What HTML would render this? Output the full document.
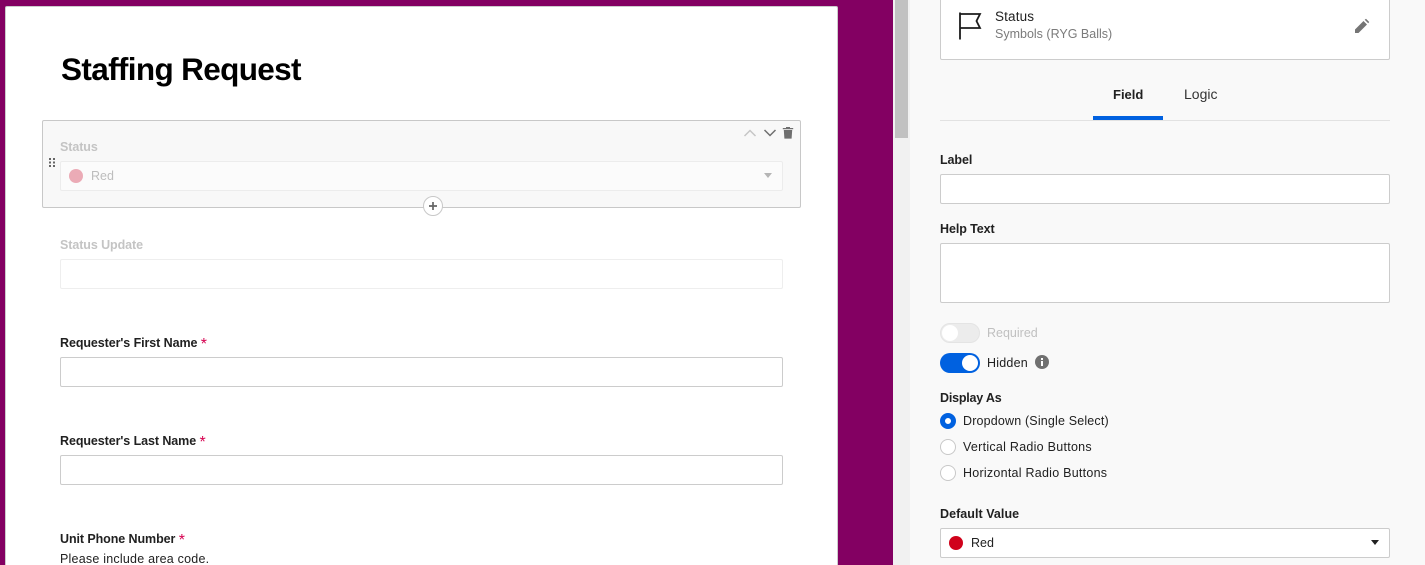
<!DOCTYPE html>
<html>
<head>
<meta charset="utf-8">
<style>
html,body{margin:0;padding:0;width:1425px;height:565px;overflow:hidden;background:#f9f9f9;font-family:"Liberation Sans",sans-serif;color:#212121}
#root{position:absolute;left:0;top:0;width:1425px;height:565px;overflow:hidden;background:#f9f9f9}
div,span,svg{position:absolute;box-sizing:border-box}
.t{white-space:nowrap;font-size:12.5px;line-height:16px}
.r{letter-spacing:.22px}
.rd{letter-spacing:0}
.b{font-weight:bold;font-size:12.5px;letter-spacing:-.08px}
.box{border:1px solid #cccccc;border-radius:2px;background:#fff}
.faint{border:1px solid #eeeeee;border-radius:2px;background:#fff}
.star{position:relative!important;top:2px;color:#d6004f;font-weight:normal;font-size:16px;line-height:12px;margin-left:0}
.radio{width:16px;height:16px;border-radius:50%;border:1px solid #c8c8c8;background:#fff}
</style>
</head>
<body>
<div id="root">
<div style="left:0;top:0;width:893px;height:565px;background:#830062"></div>
<div style="left:5px;top:6px;width:833px;height:570px;background:#fff;border:1px solid #cccccc;border-radius:2px"></div>
<div class="t" style="left:61px;top:50px;font-size:31.5px;line-height:38px;font-weight:bold;color:#000;letter-spacing:-.65px">Staffing Request</div>

<div style="left:42px;top:120px;width:759px;height:88px;background:#f8f8f8;border:1px solid #c8c8c8;border-radius:2px"></div>
<svg style="left:743px;top:128px" width="14" height="10" viewBox="0 0 14 10"><path d="M1.5 8L7 2.5 12.5 8" fill="none" stroke="#c6c6c6" stroke-width="1.5"/></svg>
<svg style="left:763px;top:128px" width="14" height="10" viewBox="0 0 14 10"><path d="M1.5 2L7 7.5 12.5 2" fill="none" stroke="#6f6f6f" stroke-width="1.5"/></svg>
<svg style="left:782px;top:126px" width="12" height="13" viewBox="0 0 12 13"><path d="M.8 2h10.4v1.2H.8zM4 1h4v1H4zM1.8 4h8.4l-.6 8.6H2.4z" fill="#6f6f6f"/></svg>
<svg style="left:48px;top:157px" width="8" height="11" viewBox="0 0 8 11"><path d="M1 1h2v2H1zM5 1h2v2H5zM1 4.5h2v2H1zM5 4.500h2v2H5zM1 8h2v2H1zM5 8h2v2H5z" fill="#666"/></svg>
<div class="t b" style="left:60px;top:139px;color:#c4c4c4">Status</div>
<div style="left:60px;top:161px;width:723px;height:30px;background:#fbfbfb;border:1px solid #ececec;border-radius:2px"></div>
<div style="left:69px;top:169px;width:14px;height:14px;border-radius:50%;background:#ebabb6"></div>
<div class="t rd" style="left:91px;top:168px;color:#bdbdbd">Red</div>
<svg style="left:764px;top:173px" width="8" height="5" viewBox="0 0 8 5"><path d="M0 0h8L4 5z" fill="#b5b5b5"/></svg>
<div style="left:423px;top:196px;width:20px;height:20px;border-radius:50%;background:#fff;border:1px solid #c8c8c8"></div>
<svg style="left:428px;top:201px" width="10" height="10" viewBox="0 0 10 10"><path d="M5 1v8M1 5h8" stroke="#666" stroke-width="1.7"/></svg>

<div class="t b" style="left:60px;top:237px;color:#c4c4c4">Status Update</div>
<div class="faint" style="left:60px;top:259px;width:723px;height:30px"></div>
<div class="t b" style="left:60px;top:335px">Requester's First Name <span class="star">*</span></div>
<div class="box" style="left:60px;top:357px;width:723px;height:30px"></div>
<div class="t b" style="left:60px;top:433px">Requester's Last Name <span class="star">*</span></div>
<div class="box" style="left:60px;top:455px;width:723px;height:30px"></div>
<div class="t b" style="left:60px;top:531px">Unit Phone Number <span class="star">*</span></div>
<div class="t r" style="left:60px;top:551px">Please include area code.</div>

<div style="left:893px;top:0;width:17px;height:565px;background:#f1f1f1"></div>
<div style="left:895px;top:0;width:13px;height:138px;background:#c1c1c1"></div>

<div class="box" style="left:940px;top:-4px;width:450px;height:64px"></div>
<svg style="left:955px;top:10px" width="28" height="32" viewBox="0 0 28 32"><path d="M5 2.5v27M5 4H25l-3.5 7L25 18H5" fill="none" stroke="#1c1c1c" stroke-width="1.8"/></svg>
<div class="t" style="left:995px;top:9px;font-size:13.5px;letter-spacing:.15px">Status</div>
<div class="t" style="left:995px;top:26px;color:#7b7b7b">Symbols (RYG Balls)</div>
<svg style="left:1354px;top:18px" width="16" height="16" viewBox="0 0 16 16"><path d="M1 11.5L9.5 3 13 6.5 4.5 15H1zM10.7 1.8L12 .8l3.2 3.2-1 1.3z" fill="#757575"/></svg>

<div class="t" style="left:1113px;top:87px;font-weight:bold;font-size:13px">Field</div>
<div class="t" style="left:1184px;top:86px;font-size:14px;color:#333">Logic</div>
<div style="left:940px;top:120px;width:450px;height:1px;background:#e2e2e2"></div>
<div style="left:1093px;top:116px;width:70px;height:4px;background:#0061e0"></div>

<div class="t b" style="left:940px;top:152px">Label</div>
<div class="box" style="left:940px;top:174px;width:450px;height:30px"></div>
<div class="t b" style="left:940px;top:221px">Help Text</div>
<div class="box" style="left:940px;top:243px;width:450px;height:60px"></div>

<div style="left:940px;top:323px;width:40px;height:20px;border-radius:10px;background:#ececec;border:1px solid #e4e4e4"></div>
<div style="left:942px;top:325px;width:16px;height:16px;border-radius:50%;background:#fff"></div>
<div class="t" style="left:987px;top:325px;color:#c0c0c0">Required</div>
<div style="left:940px;top:353px;width:40px;height:20px;border-radius:10px;background:#0061e0"></div>
<div style="left:962px;top:355px;width:16px;height:16px;border-radius:50%;background:#fff"></div>
<div class="t r" style="left:987px;top:355px">Hidden</div>
<div style="left:1035px;top:355px;width:14px;height:14px;border-radius:50%;background:#707070"></div>
<svg style="left:1035px;top:355px" width="14" height="14" viewBox="0 0 14 14"><path d="M6 3h2v2H6zM6 6h2v5H6z" fill="#fff"/></svg>

<div class="t b" style="left:940px;top:390px;letter-spacing:-.2px">Display As</div>
<div class="radio" style="left:940px;top:413px;background:#fff;border:5px solid #0061e0"></div>
<div class="t r" style="left:963px;top:413px;letter-spacing:.17px">Dropdown (Single Select)</div>
<div class="radio" style="left:940px;top:439px"></div>
<div class="t r" style="left:963px;top:439px;letter-spacing:.27px">Vertical Radio Buttons</div>
<div class="radio" style="left:940px;top:465px"></div>
<div class="t r" style="left:963px;top:465px;letter-spacing:.25px">Horizontal Radio Buttons</div>

<div class="t b" style="left:940px;top:506px;letter-spacing:.05px">Default Value</div>
<div class="box" style="left:940px;top:528px;width:450px;height:30px"></div>
<div style="left:949px;top:536px;width:14px;height:14px;border-radius:50%;background:#d0021b"></div>
<div class="t rd" style="left:971px;top:535px">Red</div>
<svg style="left:1371px;top:540px" width="8" height="5" viewBox="0 0 8 5"><path d="M0 0h8L4 5z" fill="#212121"/></svg>
</div>
</body>
</html>
